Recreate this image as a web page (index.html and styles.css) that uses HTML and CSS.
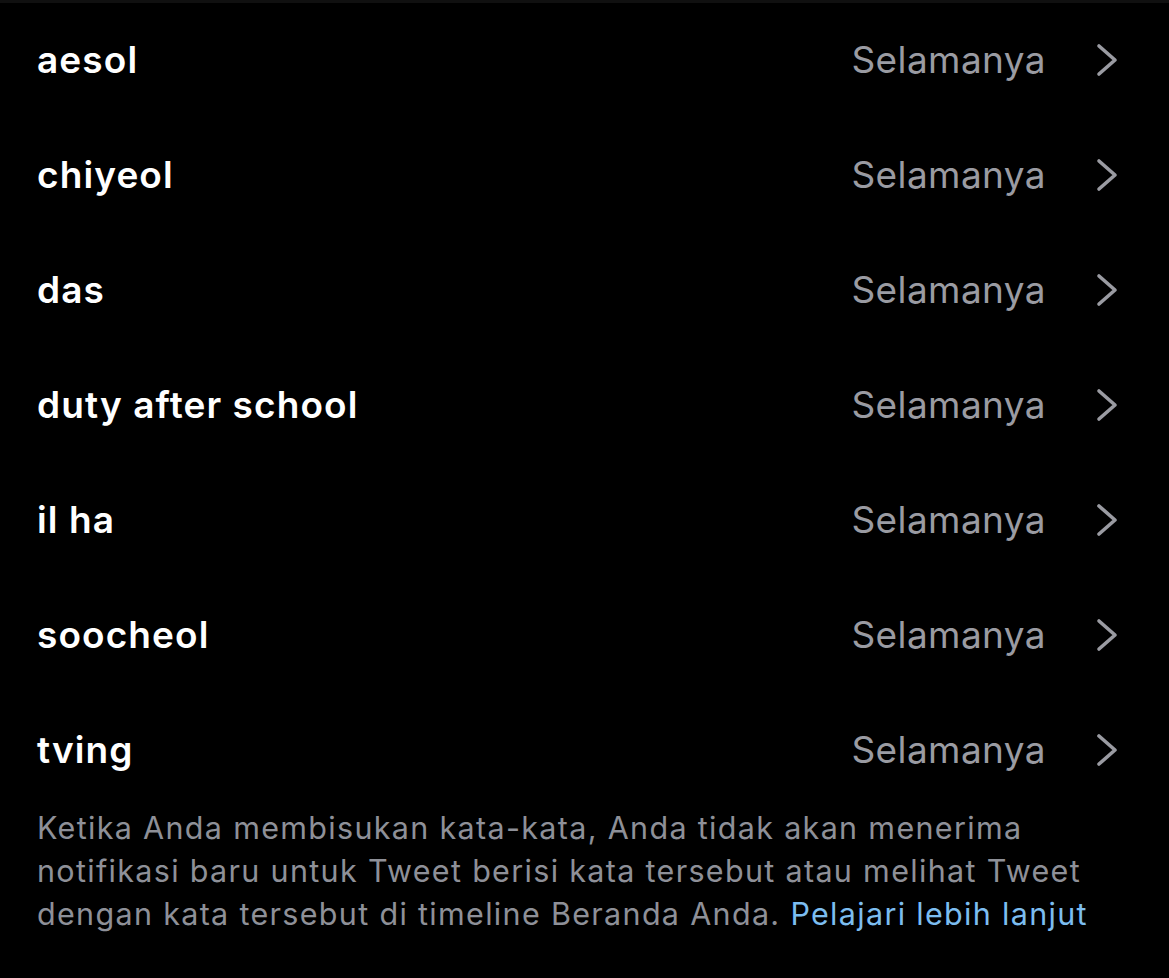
FILE: index.html
```html
<!DOCTYPE html>
<html lang="id">
<head>
<meta charset="utf-8">
<link rel="stylesheet" href="styles.css">
</head>
<body>
<div class="topbar"></div>
<ul class="list">
  <li class="row"><span class="word">aesol</span><span class="dur">Selamanya</span><svg class="chev" viewBox="0 0 22 34"><path d="M3 3 L19 17 L3 31"/></svg></li>
  <li class="row"><span class="word">chiyeol</span><span class="dur">Selamanya</span><svg class="chev" viewBox="0 0 22 34"><path d="M3 3 L19 17 L3 31"/></svg></li>
  <li class="row"><span class="word">das</span><span class="dur">Selamanya</span><svg class="chev" viewBox="0 0 22 34"><path d="M3 3 L19 17 L3 31"/></svg></li>
  <li class="row"><span class="word">duty after school</span><span class="dur">Selamanya</span><svg class="chev" viewBox="0 0 22 34"><path d="M3 3 L19 17 L3 31"/></svg></li>
  <li class="row"><span class="word">il ha</span><span class="dur">Selamanya</span><svg class="chev" viewBox="0 0 22 34"><path d="M3 3 L19 17 L3 31"/></svg></li>
  <li class="row"><span class="word">soocheol</span><span class="dur">Selamanya</span><svg class="chev" viewBox="0 0 22 34"><path d="M3 3 L19 17 L3 31"/></svg></li>
  <li class="row"><span class="word">tving</span><span class="dur">Selamanya</span><svg class="chev" viewBox="0 0 22 34"><path d="M3 3 L19 17 L3 31"/></svg></li>
</ul>
<p class="note">Ketika Anda membisukan kata-kata, Anda tidak akan menerima notifikasi baru untuk Tweet berisi kata tersebut atau melihat Tweet dengan kata tersebut di timeline Beranda Anda. <a class="link" href="#">Pelajari lebih lanjut</a></p>
</body>
</html>
```
FILE: styles.css
```css
html, body {
  margin: 0;
  padding: 0;
  background: #000;
}
body {
  width: 1169px;
  height: 978px;
  overflow: hidden;
  font-family: Inter, "Noto Sans", sans-serif;
}
.topbar {
  height: 3px;
  background: #101010;
}
.list {
  list-style: none;
  margin: 0;
  padding: 0;
}
.row {
  height: 115px;
  box-sizing: border-box;
  display: flex;
  align-items: center;
  padding: 0 51px 2px 37px;
}
.word {
  flex: 1;
  color: #fff;
  font-size: 37px;
  font-weight: 600;
  letter-spacing: 1.1px;
}
.dur {
  color: #9a9ba2;
  font-size: 37px;
  font-weight: 400;
  letter-spacing: 0.4px;
}
.chev {
  width: 22px;
  height: 34px;
  margin-left: 50px;
}
.chev path {
  fill: none;
  stroke: #9a9ba2;
  stroke-width: 3.6;
  stroke-linecap: round;
  stroke-linejoin: round;
}
.note {
  margin: -2px 0 0;
  padding: 0 25px 0 37px;
  color: #8e9098;
  font-size: 30.5px;
  line-height: 43px;
  letter-spacing: 1.32px;
}
.link {
  color: #7cbdf0;
  text-decoration: none;
}
```
